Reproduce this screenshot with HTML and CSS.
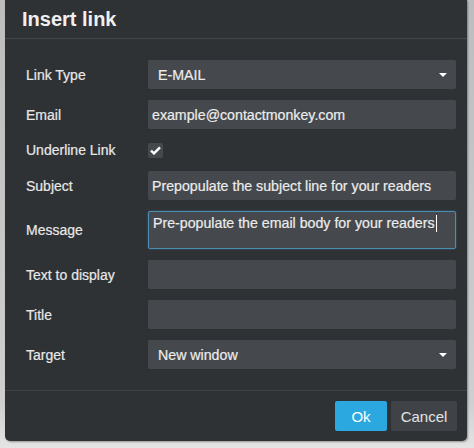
FILE: index.html
```html
<!DOCTYPE html>
<html>
<head>
<meta charset="utf-8">
<link rel="stylesheet" href="styles.css">
</head>
<body>
<div class="dialog">
  <div class="header"><h1 class="title">Insert link</h1></div>
  <div class="body">
    <div class="row"><label class="label">Link Type</label>
      <div class="field select"><span>E-MAIL</span><span class="caret"></span></div></div>
    <div class="row"><label class="label">Email</label>
      <div class="field"><span>example@contactmonkey.com</span></div></div>
    <div class="row row-check"><label class="label">Underline Link</label>
      <div class="check"><svg width="11" height="9" viewBox="0 0 11 9"><path d="M1 4.6 L4 7.4 L10 1.4" fill="none" stroke="#fff" stroke-width="2.4"/></svg></div></div>
    <div class="row"><label class="label">Subject</label>
      <div class="field"><span>Prepopulate the subject line for your readers</span></div></div>
    <div class="row row-msg"><label class="label">Message</label>
      <div class="field textarea"><span>Pre-populate the email body for your readers</span><span class="cursor"></span></div></div>
    <div class="row"><label class="label">Text to display</label>
      <div class="field"></div></div>
    <div class="row"><label class="label">Title</label>
      <div class="field"></div></div>
    <div class="row"><label class="label">Target</label>
      <div class="field select"><span>New window</span><span class="caret"></span></div></div>
  </div>
  <div class="footer">
    <button class="btn btn-ok">Ok</button>
    <button class="btn btn-cancel">Cancel</button>
  </div>
</div>
</body>
</html>
```
FILE: styles.css
```css
html, body { margin: 0; padding: 0; }
body {
  background: linear-gradient(#bdbdbd, #cfcfcf 90%, #e4e4e4);
  width: 474px;
  height: 448px;
  overflow: hidden;
  font-family: "Liberation Sans", Arial, sans-serif;
}
.dialog {
  margin-left: 5px;
  width: 462px;
  height: 441px;
  background: #2f3235;
  border-radius: 0 0 5px 5px;
  box-shadow: 1px 1px 2px rgba(0,0,0,0.35);
  display: flex;
  flex-direction: column;
}
.header {
  height: 38px;
  border-bottom: 1px solid #43474b;
  display: flex;
  align-items: center;
  padding-left: 17px;
}
.title {
  margin: 0;
  font-size: 20px;
  font-weight: bold;
  color: #f0f0f0;
}
.body {
  padding: 21px 11px 21px 21px;
  display: flex;
  flex-direction: column;
  gap: 11px;
}
.row {
  display: flex;
  align-items: center;
  height: 29px;
}
.row-check { height: 20px; }
.row-msg { height: 38px; }
.label {
  width: 122px;
  font-size: 14px;
  color: #e8e8e8;
  -webkit-text-stroke: 0.2px #e8e8e8;
}
.field {
  width: 308px;
  height: 100%;
  box-sizing: border-box;
  background: #45494d;
  border-radius: 2px;
  color: #ececec;
  font-size: 14.2px;
  padding: 0 4px;
  display: flex;
  align-items: center;
  -webkit-text-stroke: 0.2px #ececec;
}
.select { padding-left: 10px; justify-content: space-between; padding-right: 9px; }
.caret {
  width: 0; height: 0;
  border-left: 4px solid transparent;
  border-right: 4px solid transparent;
  border-top: 4px solid #ffffff;
}
.textarea {
  align-items: flex-start;
  padding-top: 3px;
  border: 1px solid #4c8db3;
  box-shadow: 0 0 2px rgba(76,141,179,0.6);
}
.cursor {
  display: inline-block;
  width: 1px;
  height: 17px;
  background: #ffffff;
  margin-left: 1px;
}
.check {
  width: 15px;
  height: 15px;
  background: #45494d;
  border-radius: 2px;
  display: flex;
  align-items: center;
  justify-content: center;
}
.footer {
  border-top: 1px solid #3d4145;
  padding: 10px 10px 0 0;
  display: flex;
  justify-content: flex-end;
  gap: 4px;
}
.btn {
  height: 30px;
  border: none;
  border-radius: 2px;
  font-family: "Liberation Sans", Arial, sans-serif;
  font-size: 15px;
  padding: 0;
}
.btn-ok { width: 52px; background: #2aa8df; color: #ffffff; }
.btn-cancel { width: 66px; background: #3f4347; color: #e4e4e4; }
```
